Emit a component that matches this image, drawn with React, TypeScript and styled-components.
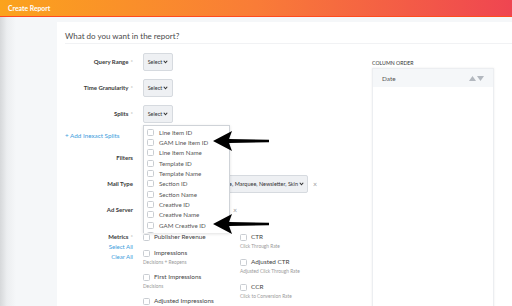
import React from 'react'
import styled, { createGlobalStyle } from 'styled-components'

const GlobalStyle = createGlobalStyle`
  html, body { margin: 0; padding: 0; }
  body {
    font-family: Lato, "Open Sans", sans-serif;
    background: #f5f7f9;
    width: 512px;
    height: 306px;
    overflow: hidden;
  }
`

const Header = styled.header`
  height: 16px;
  border-bottom: 1px solid #ff4b1f;
  background: linear-gradient(90deg, #fba31d 0%, #f97c37 50%, #ef4551 100%);
  color: #fff;
  font-size: 6.8px;
  font-weight: 700;
  display: flex;
  align-items: center;
  padding-left: 8px;
`

const Page = styled.div`
  display: flex;
  height: 289px;
  padding-top: 5px;
  box-sizing: border-box;
  background: linear-gradient(90deg, #d6d8da 0, #eceef0 7px, #f5f7f9 16px);
`

const Spacer = styled.div`
  width: 57px;
  flex-shrink: 0;
`

const Panel = styled.main`
  flex: 1;
  background: #fff;
  padding: 8px 18px 0 8px;
  overflow: hidden;
`

const Title = styled.h1`
  margin: 0 -18px 0 0;
  font-size: 8px;
  font-weight: 400;
  line-height: 12px;
  color: #4a4a4a;
  padding-bottom: 1px;
  border-bottom: 1px solid #f1f2f4;
`

const Body = styled.div`
  display: flex;
`

const Form = styled.div`
  flex: 1;
  display: flex;
  flex-direction: column;
  gap: 8px;
  padding-top: 9px;
`

const Row = styled.div<{ $top?: boolean }>`
  display: grid;
  grid-template-columns: 68px auto;
  column-gap: 10px;
  align-items: ${p => (p.$top ? 'start' : 'center')};
  min-height: 18px;
  padding-top: ${p => (p.$top ? '5px' : '0')};
`

const Label = styled.div`
  text-align: right;
  font-size: 6px;
  font-weight: 700;
  color: #3a3a3a;
  line-height: 10px;
`

const Star = styled.span`
  color: #aaa;
  font-weight: 400;
  margin-left: 2px;
`

const Control = styled.div`
  position: relative;
  display: flex;
  align-items: center;
  gap: 5px;
`

const SelectBox = styled.div<{ $w?: number }>`
  height: 18px;
  width: ${p => (p.$w ? `${p.$w}px` : '30px')};
  box-sizing: border-box;
  background: #eef0f3;
  border: 1px solid #d6dadf;
  border-radius: 2px;
  display: flex;
  align-items: center;
  justify-content: ${p => (p.$w ? 'flex-end' : 'center')};
  padding: 0 3px;
  gap: 1px;
  font-size: 5.5px;
  color: #333;
  white-space: nowrap;
  overflow: hidden;
`

const Clear = styled.span`
  color: #9a9a9a;
  font-size: 7px;
`

const LinkRow = styled.a`
  font-size: 6.3px;
  line-height: 10px;
  color: #3d9ddc;
  text-decoration: none;
`

const Links = styled.div`
  display: flex;
  flex-direction: column;
  align-items: flex-end;
`

const SmallLink = styled.a`
  font-size: 6px;
  line-height: 10px;
  color: #3d9ddc;
`

const Menu = styled.div`
  position: absolute;
  left: 0;
  top: 20px;
  width: 87px;
  height: 108px;
  box-sizing: border-box;
  background: #fff;
  border: 1px solid #cfd3d8;
  border-bottom: none;
  box-shadow: 0 1px 3px rgba(0, 0, 0, 0.12);
  padding-top: 1px;
  overflow: hidden;
  z-index: 2;
`

const MenuItem = styled.div`
  display: flex;
  align-items: center;
  height: 10.35px;
  padding-left: 3px;
  gap: 5px;
  font-size: 6.2px;
  color: #555;
`

const Box = styled.span`
  width: 7px;
  height: 7px;
  box-sizing: border-box;
  border: 1px solid #c9cdd2;
  border-radius: 1.5px;
  background: #fff;
  flex-shrink: 0;
`

const Pointer = styled.svg<{ $top: number }>`
  position: absolute;
  left: 70px;
  top: ${p => p.$top}px;
  z-index: 3;
`

const Metrics = styled.div`
  position: relative;
  z-index: 3;
  display: grid;
  grid-template-columns: 97px 97px;
`

const MetricCol = styled.div<{ $gap: number }>`
  display: flex;
  flex-direction: column;
  gap: ${p => p.$gap}px;
`

const Metric = styled.div``

const MetricName = styled.div`
  display: flex;
  align-items: center;
  gap: 4px;
  font-size: 6.4px;
  line-height: 10px;
  color: #444;
`

const MetricSub = styled.div`
  font-size: 4.8px;
  line-height: 8px;
  color: #9a9a9a;
`

const Side = styled.aside`
  width: 122px;
  margin-top: 16px;
  display: flex;
  flex-direction: column;
`

const SideLabel = styled.div`
  font-size: 5.2px;
  line-height: 6px;
  color: #333;
  margin-bottom: 2px;
`

const OrderBox = styled.div`
  height: 260px;
  background: #fff;
  border: 1px solid #eceef1;
  box-shadow: 0 0 2px rgba(0, 0, 0, 0.08);
`

const OrderRow = styled.div`
  height: 18px;
  background: #f5f7f9;
  display: flex;
  align-items: center;
  justify-content: space-between;
  padding: 0 9px;
  font-size: 6.4px;
  color: #555;
`

const Sorts = styled.div`
  display: flex;
  gap: 1.5px;
`

const Chevron = () => (
  <svg width="5" height="4" viewBox="0 0 10 8">
    <path d="M1.5 1.5 L5 5.5 L8.5 1.5" fill="none" stroke="#333" strokeWidth="2.2" />
  </svg>
)

const Arrow = ({ top }: { top: number }) => (
  <Pointer $top={top} width="58" height="22" viewBox="0 0 58 22">
    <path d="M0 11 L19 1 L16 9 L56 9.8 L56 12.2 L16 13 L19 21 Z" fill="#000" />
  </Pointer>
)

const splits = [
  'Line Item ID',
  'GAM Line Item ID',
  'Line Item Name',
  'Template ID',
  'Template Name',
  'Section ID',
  'Section Name',
  'Creative ID',
  'Creative Name',
  'GAM Creative ID',
  'Creative Size',
]

const leftMetrics = [
  { name: 'Publisher Revenue' },
  { name: 'Impressions', sub: 'Decisions + Reopens' },
  { name: 'First Impressions', sub: 'Decisions' },
  { name: 'Adjusted Impressions' },
]

const rightMetrics = [
  { name: 'CTR', sub: 'Click Through Rate' },
  { name: 'Adjusted CTR', sub: 'Adjusted Click Through Rate' },
  { name: 'CCR', sub: 'Click to Conversion Rate' },
]

const MetricList = ({ items, gap }: { items: { name: string; sub?: string }[]; gap: number }) => (
  <MetricCol $gap={gap}>
    {items.map(m => (
      <Metric key={m.name}>
        <MetricName>
          <Box />
          {m.name}
        </MetricName>
        {m.sub && <MetricSub>{m.sub}</MetricSub>}
      </Metric>
    ))}
  </MetricCol>
)

const Select = ({ text = 'Select', w }: { text?: string; w?: number }) => (
  <SelectBox $w={w}>
    {text}
    <Chevron />
  </SelectBox>
)

export default function App() {
  return (
    <>
      <GlobalStyle />
      <Header>Create Report</Header>
      <Page>
        <Spacer />
        <Panel>
          <Title>What do you want in the report?</Title>
          <Body>
            <Form>
              <Row>
                <Label>Query Range<Star>*</Star></Label>
                <Control><Select /></Control>
              </Row>
              <Row>
                <Label>Time Granularity<Star>*</Star></Label>
                <Control><Select /></Control>
              </Row>
              <Row>
                <Label>Splits<Star>*</Star></Label>
                <Control>
                  <Select />
                  <Menu>
                    {splits.map(s => (
                      <MenuItem key={s}>
                        <Box />
                        {s}
                      </MenuItem>
                    ))}
                  </Menu>
                  <Arrow top={25} />
                  <Arrow top={108} />
                </Control>
              </Row>
              <LinkRow href="#">+ Add Inexact Splits</LinkRow>
              <Row>
                <Label>Filters</Label>
                <div />
              </Row>
              <Row>
                <Label>Mail Type</Label>
                <Control>
                  <Select w={165} text="Dedicated, Display, Homepage, Marquee, Newsletter, Skin" />
                  <Clear>×</Clear>
                </Control>
              </Row>
              <Row>
                <Label>Ad Server</Label>
                <Control>
                  <Select w={85} text="Select" />
                  <Clear>×</Clear>
                </Control>
              </Row>
              <Row $top>
                <Links>
                  <Label>Metrics<Star>*</Star></Label>
                  <SmallLink>Select All</SmallLink>
                  <SmallLink>Clear All</SmallLink>
                </Links>
                <Metrics>
                  <MetricList items={leftMetrics} gap={6} />
                  <MetricList items={rightMetrics} gap={7} />
                </Metrics>
              </Row>
            </Form>
            <Side>
              <SideLabel>COLUMN ORDER</SideLabel>
              <OrderBox>
                <OrderRow>
                  Date
                  <Sorts>
                    <svg width="7" height="5" viewBox="0 0 7 5"><path d="M0 5 L3.5 0 L7 5 Z" fill="#b3b8bf" /></svg>
                    <svg width="7" height="5" viewBox="0 0 7 5"><path d="M0 0 L3.5 5 L7 0 Z" fill="#b3b8bf" /></svg>
                  </Sorts>
                </OrderRow>
              </OrderBox>
            </Side>
          </Body>
        </Panel>
      </Page>
    </>
  )
}
